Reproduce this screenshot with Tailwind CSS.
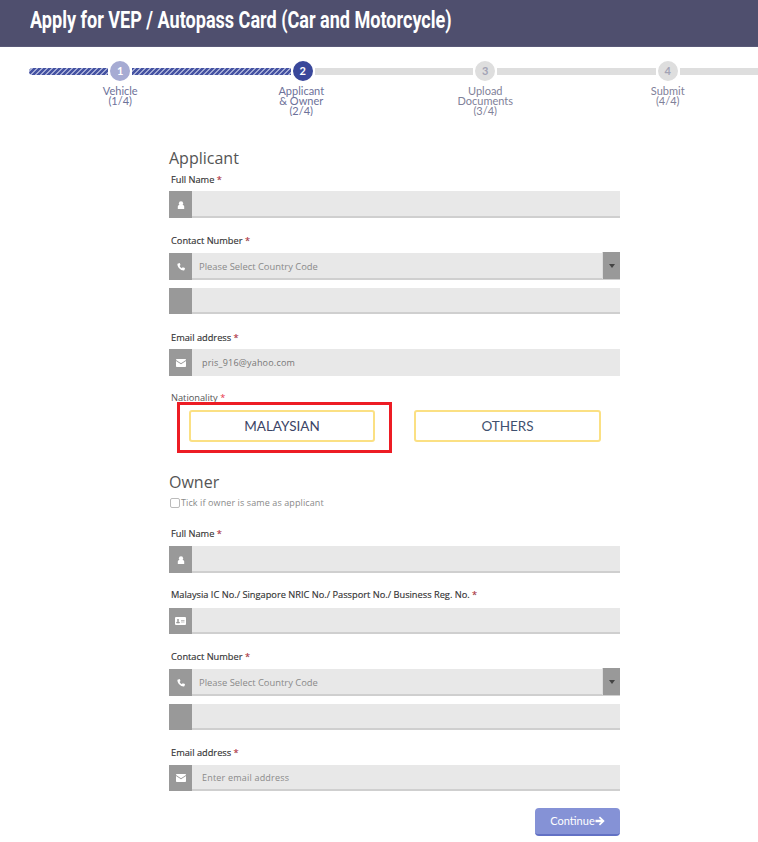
<!DOCTYPE html>
<html lang="en">
<head>
    <meta charset="UTF-8">
    <title>Apply for VEP / Autopass Card</title>
    <script src="https://cdn.jsdelivr.net/npm/@tailwindcss/browser@4"></script>
</head>
<body class="bg-white overflow-hidden h-[842px] font-['Open_Sans',sans-serif]">
    <!-- Header -->
    <header class="h-[47px] bg-[#4f4f6e] pl-[30px] pt-[7px] border-b border-[#5a5a78] overflow-hidden">
        <h1 class="origin-left scale-x-[0.785] w-[540px] text-[23px] leading-[28px] font-bold text-white font-['Roboto',sans-serif] whitespace-nowrap">Apply for VEP / Autopass Card (Car and Motorcycle)</h1>
    </header>

    <!-- Stepper -->
    <section class="flex pl-[29px] pt-[12px] w-[758px] overflow-hidden font-['Lato',sans-serif] text-[11px] leading-[10px] text-center">
        <div class="w-[182.5px] shrink-0 flex flex-col items-stretch">
            <div class="flex items-center">
                <div class="flex-1 h-[7px] rounded-l-full bg-[repeating-linear-gradient(135deg,#4452a2_0px,#4452a2_2px,#a3aad4_2px,#a3aad4_3.5px)]"></div>
                <div class="w-[24px] h-[24px] rounded-full border-2 border-white bg-[#a6abd3] text-white text-[11px] font-bold flex items-center justify-center">1</div>
                <div class="flex-1 h-[7px] bg-[repeating-linear-gradient(135deg,#4452a2_0px,#4452a2_2px,#a3aad4_2px,#a3aad4_3.5px)]"></div>
            </div>
            <p class="mt-[3px] text-[#6d7199]">Vehicle<br>(1/4)</p>
        </div>
        <div class="w-[182.5px] shrink-0 flex flex-col items-stretch">
            <div class="flex items-center">
                <div class="flex-1 h-[7px] bg-[repeating-linear-gradient(135deg,#4452a2_0px,#4452a2_2px,#a3aad4_2px,#a3aad4_3.5px)]"></div>
                <div class="w-[24px] h-[24px] rounded-full border-2 border-white bg-[#39479a] text-white text-[11px] font-bold flex items-center justify-center">2</div>
                <div class="flex-1 h-[7px] bg-[#dedede]"></div>
            </div>
            <p class="mt-[3px] pr-[3px] text-[#6d7199]">Applicant<br>&amp; Owner<br>(2/4)</p>
        </div>
        <div class="w-[182.5px] shrink-0 flex flex-col items-stretch">
            <div class="flex items-center">
                <div class="flex-1 h-[7px] bg-[#dedede]"></div>
                <div class="w-[24px] h-[24px] rounded-full border-2 border-white bg-[#dedede] text-[#a3a3b5] text-[11px] font-bold flex items-center justify-center">3</div>
                <div class="flex-1 h-[7px] bg-[#dedede]"></div>
            </div>
            <p class="mt-[3px] text-[#7f8199]">Upload<br>Documents<br>(3/4)</p>
        </div>
        <div class="w-[182.5px] shrink-0 flex flex-col items-stretch">
            <div class="flex items-center">
                <div class="flex-1 h-[7px] bg-[#dedede]"></div>
                <div class="w-[24px] h-[24px] rounded-full border-2 border-white bg-[#dedede] text-[#a3a3b5] text-[11px] font-bold flex items-center justify-center">4</div>
                <div class="flex-1 h-[7px] bg-[#dedede]"></div>
            </div>
            <p class="mt-[3px] text-[#7f8199]">Submit<br>(4/4)</p>
        </div>
    </section>

    <!-- Form -->
    <main class="ml-[169px] w-[451px] mt-[30px]">
        <h2 class="text-[16px] leading-[24px] text-[#555]">Applicant</h2>

        <label class="block mt-[4px] pl-[2px] text-[9.25px] leading-[12px] text-[#333] [-webkit-text-stroke:0.15px_#333]">Full Name <span class="text-[#e8334a]">*</span></label>
        <div class="mt-[5px] flex h-[27px]">
            <div class="w-[23px] bg-[#999] flex items-center justify-center">
                <svg class="w-[8px] h-[8px]" viewBox="0 0 10 10" fill="#fff"><circle cx="5" cy="3" r="2.7"/><path d="M1 10V7.2C1 5.8 2 5 3 5h4c1 0 2 .8 2 2.2V10z"/></svg>
            </div>
            <div class="flex-1 bg-[#e8e8e8] border-b-2 border-[#cfcfcf]"></div>
        </div>

        <label class="block mt-[17px] pl-[2px] text-[9.25px] leading-[12px] text-[#333] [-webkit-text-stroke:0.15px_#333]">Contact Number <span class="text-[#e8334a]">*</span></label>
        <div class="mt-[6px] flex h-[27px]">
            <div class="w-[23px] bg-[#999] flex items-center justify-center">
                <svg class="w-[8px] h-[8px]" viewBox="0 0 10 10" fill="#fff"><path d="M1.5.5 3.4 0l1 2.6-1.2 1c.5 1.3 1.5 2.3 2.9 2.9l1-1.2L10 6.3l-.5 2.2c-.1.6-.7 1-1.3.9C4.300 8.900 1 5.700.5 1.800.4 1.200.900.600 1.500.5z"/></svg>
            </div>
            <div class="flex-1 bg-[#e8e8e8] border-b-2 border-[#cfcfcf] flex items-center justify-between">
                <span class="pl-[7px] pt-[3px] text-[9.4px] text-[#8a8a8a]">Please Select Country Code</span>
                <div class="w-[18px] h-[27px] bg-[#999] border-l border-[#dcdcdc] flex items-center justify-center">
                    <svg class="w-[6px] h-[4px]" viewBox="0 0 6 4" fill="#444"><path d="M0 0h6L3 4z"/></svg>
                </div>
            </div>
        </div>
        <div class="mt-[8px] flex h-[26px]">
            <div class="w-[23px] bg-[#999]"></div>
            <div class="flex-1 bg-[#e8e8e8] border-b-2 border-[#cfcfcf]"></div>
        </div>

        <label class="block mt-[18px] pl-[2px] text-[9.25px] leading-[12px] text-[#333] [-webkit-text-stroke:0.15px_#333]">Email address <span class="text-[#e8334a]">*</span></label>
        <div class="mt-[5px] flex h-[27px]">
            <div class="w-[23px] bg-[#999] flex items-center justify-center">
                <svg class="w-[10px] h-[8px]" viewBox="0 0 10 8" fill="#fff"><path d="M1 0h8c.5 0 1 .4 1 .9L5 4.200 0 .9C0 .4.500 0 1 0z"/><path d="M0 2v5c0 .6.400 1 1 1h8c.6 0 1-.4 1-1V2L5 5.300z"/></svg>
            </div>
            <div class="flex-1 bg-[#e8e8e8] flex items-center pl-[10px] text-[9px] tracking-[0.2px] text-[#777]">pris_916@yahoo.com</div>
        </div>

        <label class="block mt-[16px] pl-[2px] text-[9.25px] leading-[12px] text-[#555]">Nationality <span class="text-[#e8334a]">*</span></label>
        <div class="flex ml-[8px] -mt-[2px] items-start">
            <div class="w-[215px] h-[51px] border-[3px] border-[#ed1c24] pl-[9px] pt-[5px]">
                <button class="w-[186px] h-[32px] border-2 border-[#fbe083] rounded-[3px] bg-white font-['Lato',sans-serif] text-[13.5px] text-[#3b4466]">MALAYSIAN</button>
            </div>
            <button class="ml-[22px] mt-[8px] w-[187px] h-[32px] border-2 border-[#fbe083] rounded-[3px] bg-white font-['Lato',sans-serif] text-[13.5px] text-[#3f5170]">OTHERS</button>
        </div>

        <h2 class="mt-[17px] text-[16px] leading-[24px] text-[#555]">Owner</h2>
        <div class="mt-[3px] pl-[1px] flex items-center h-[12px]">
            <span class="w-[10px] h-[10px] border border-[#bbb] rounded-[2px] bg-white"></span>
            <span class="ml-[1px] text-[9px] tracking-[0.1px] text-[#8a8a8a]">Tick if owner is same as applicant</span>
        </div>

        <label class="block mt-[19px] pl-[2px] text-[9.25px] leading-[12px] text-[#333] [-webkit-text-stroke:0.15px_#333]">Full Name <span class="text-[#e8334a]">*</span></label>
        <div class="mt-[6px] flex h-[27px]">
            <div class="w-[23px] bg-[#999] flex items-center justify-center">
                <svg class="w-[8px] h-[8px]" viewBox="0 0 10 10" fill="#fff"><circle cx="5" cy="3" r="2.7"/><path d="M1 10V7.2C1 5.8 2 5 3 5h4c1 0 2 .8 2 2.2V10z"/></svg>
            </div>
            <div class="flex-1 bg-[#e8e8e8] border-b-2 border-[#cfcfcf]"></div>
        </div>

        <label class="block mt-[16px] pl-[2px] text-[9.25px] leading-[12px] text-[#333] [-webkit-text-stroke:0.15px_#333]">Malaysia IC No./ Singapore NRIC No./ Passport No./ Business Reg. No. <span class="text-[#e8334a]">*</span></label>
        <div class="mt-[7px] flex h-[26px]">
            <div class="w-[23px] bg-[#999] flex items-center justify-center">
                <svg class="w-[11px] h-[8px]" viewBox="0 0 11 8"><rect width="11" height="8" rx="1" fill="#fff"/><circle cx="3" cy="3" r="1" fill="#999"/><path d="M1.500 6c0-1 .6-1.500 1.500-1.500S4.500 5 4.500 6zM6 3.500h3.500M6 5h3.500" fill="#999" stroke="#999" stroke-width=".6"/></svg>
            </div>
            <div class="flex-1 bg-[#e8e8e8] border-b-2 border-[#cfcfcf]"></div>
        </div>

        <label class="block mt-[17px] pl-[2px] text-[9.25px] leading-[12px] text-[#333] [-webkit-text-stroke:0.15px_#333]">Contact Number <span class="text-[#e8334a]">*</span></label>
        <div class="mt-[6px] flex h-[27px]">
            <div class="w-[23px] bg-[#999] flex items-center justify-center">
                <svg class="w-[8px] h-[8px]" viewBox="0 0 10 10" fill="#fff"><path d="M1.5.5 3.4 0l1 2.6-1.2 1c.5 1.3 1.5 2.3 2.9 2.9l1-1.2L10 6.3l-.5 2.2c-.1.6-.7 1-1.3.9C4.300 8.900 1 5.700.5 1.800.4 1.200.900.600 1.500.5z"/></svg>
            </div>
            <div class="flex-1 bg-[#e8e8e8] border-b-2 border-[#cfcfcf] flex items-center justify-between">
                <span class="pl-[7px] pt-[3px] text-[9.4px] text-[#8a8a8a]">Please Select Country Code</span>
                <div class="w-[18px] h-[27px] bg-[#999] border-l border-[#dcdcdc] flex items-center justify-center">
                    <svg class="w-[6px] h-[4px]" viewBox="0 0 6 4" fill="#444"><path d="M0 0h6L3 4z"/></svg>
                </div>
            </div>
        </div>
        <div class="mt-[8px] flex h-[26px]">
            <div class="w-[23px] bg-[#999]"></div>
            <div class="flex-1 bg-[#e8e8e8] border-b-2 border-[#cfcfcf]"></div>
        </div>

        <label class="block mt-[17px] pl-[2px] text-[9.25px] leading-[12px] text-[#333] [-webkit-text-stroke:0.15px_#333]">Email address <span class="text-[#e8334a]">*</span></label>
        <div class="mt-[6px] flex h-[26px]">
            <div class="w-[23px] bg-[#999] flex items-center justify-center">
                <svg class="w-[10px] h-[8px]" viewBox="0 0 10 8" fill="#fff"><path d="M1 0h8c.5 0 1 .4 1 .9L5 4.200 0 .9C0 .4.500 0 1 0z"/><path d="M0 2v5c0 .6.400 1 1 1h8c.6 0 1-.4 1-1V2L5 5.300z"/></svg>
            </div>
            <div class="flex-1 bg-[#e8e8e8] border-b-2 border-[#cfcfcf] flex items-center pl-[10px] pt-[2px] text-[9px] tracking-[0.2px] text-[#8a8a8a]">Enter email address</div>
        </div>

        <div class="mt-[17px] flex justify-end">
            <button class="w-[85px] h-[28px] rounded-[4px] bg-[#8592d6] border-b-2 border-[#6271c4] flex items-center justify-center font-['Lato',sans-serif] text-[11px] text-white">
                Continue
                <svg class="w-[10px] h-[10px]" viewBox="0 0 10 10" fill="#fff"><path d="M5 .5 9.700 5 5 9.500 3.800 8.300 6 6.200H.5V3.800H6L3.800 1.700z"/></svg>
            </button>
        </div>
    </main>
</body>
</html>
